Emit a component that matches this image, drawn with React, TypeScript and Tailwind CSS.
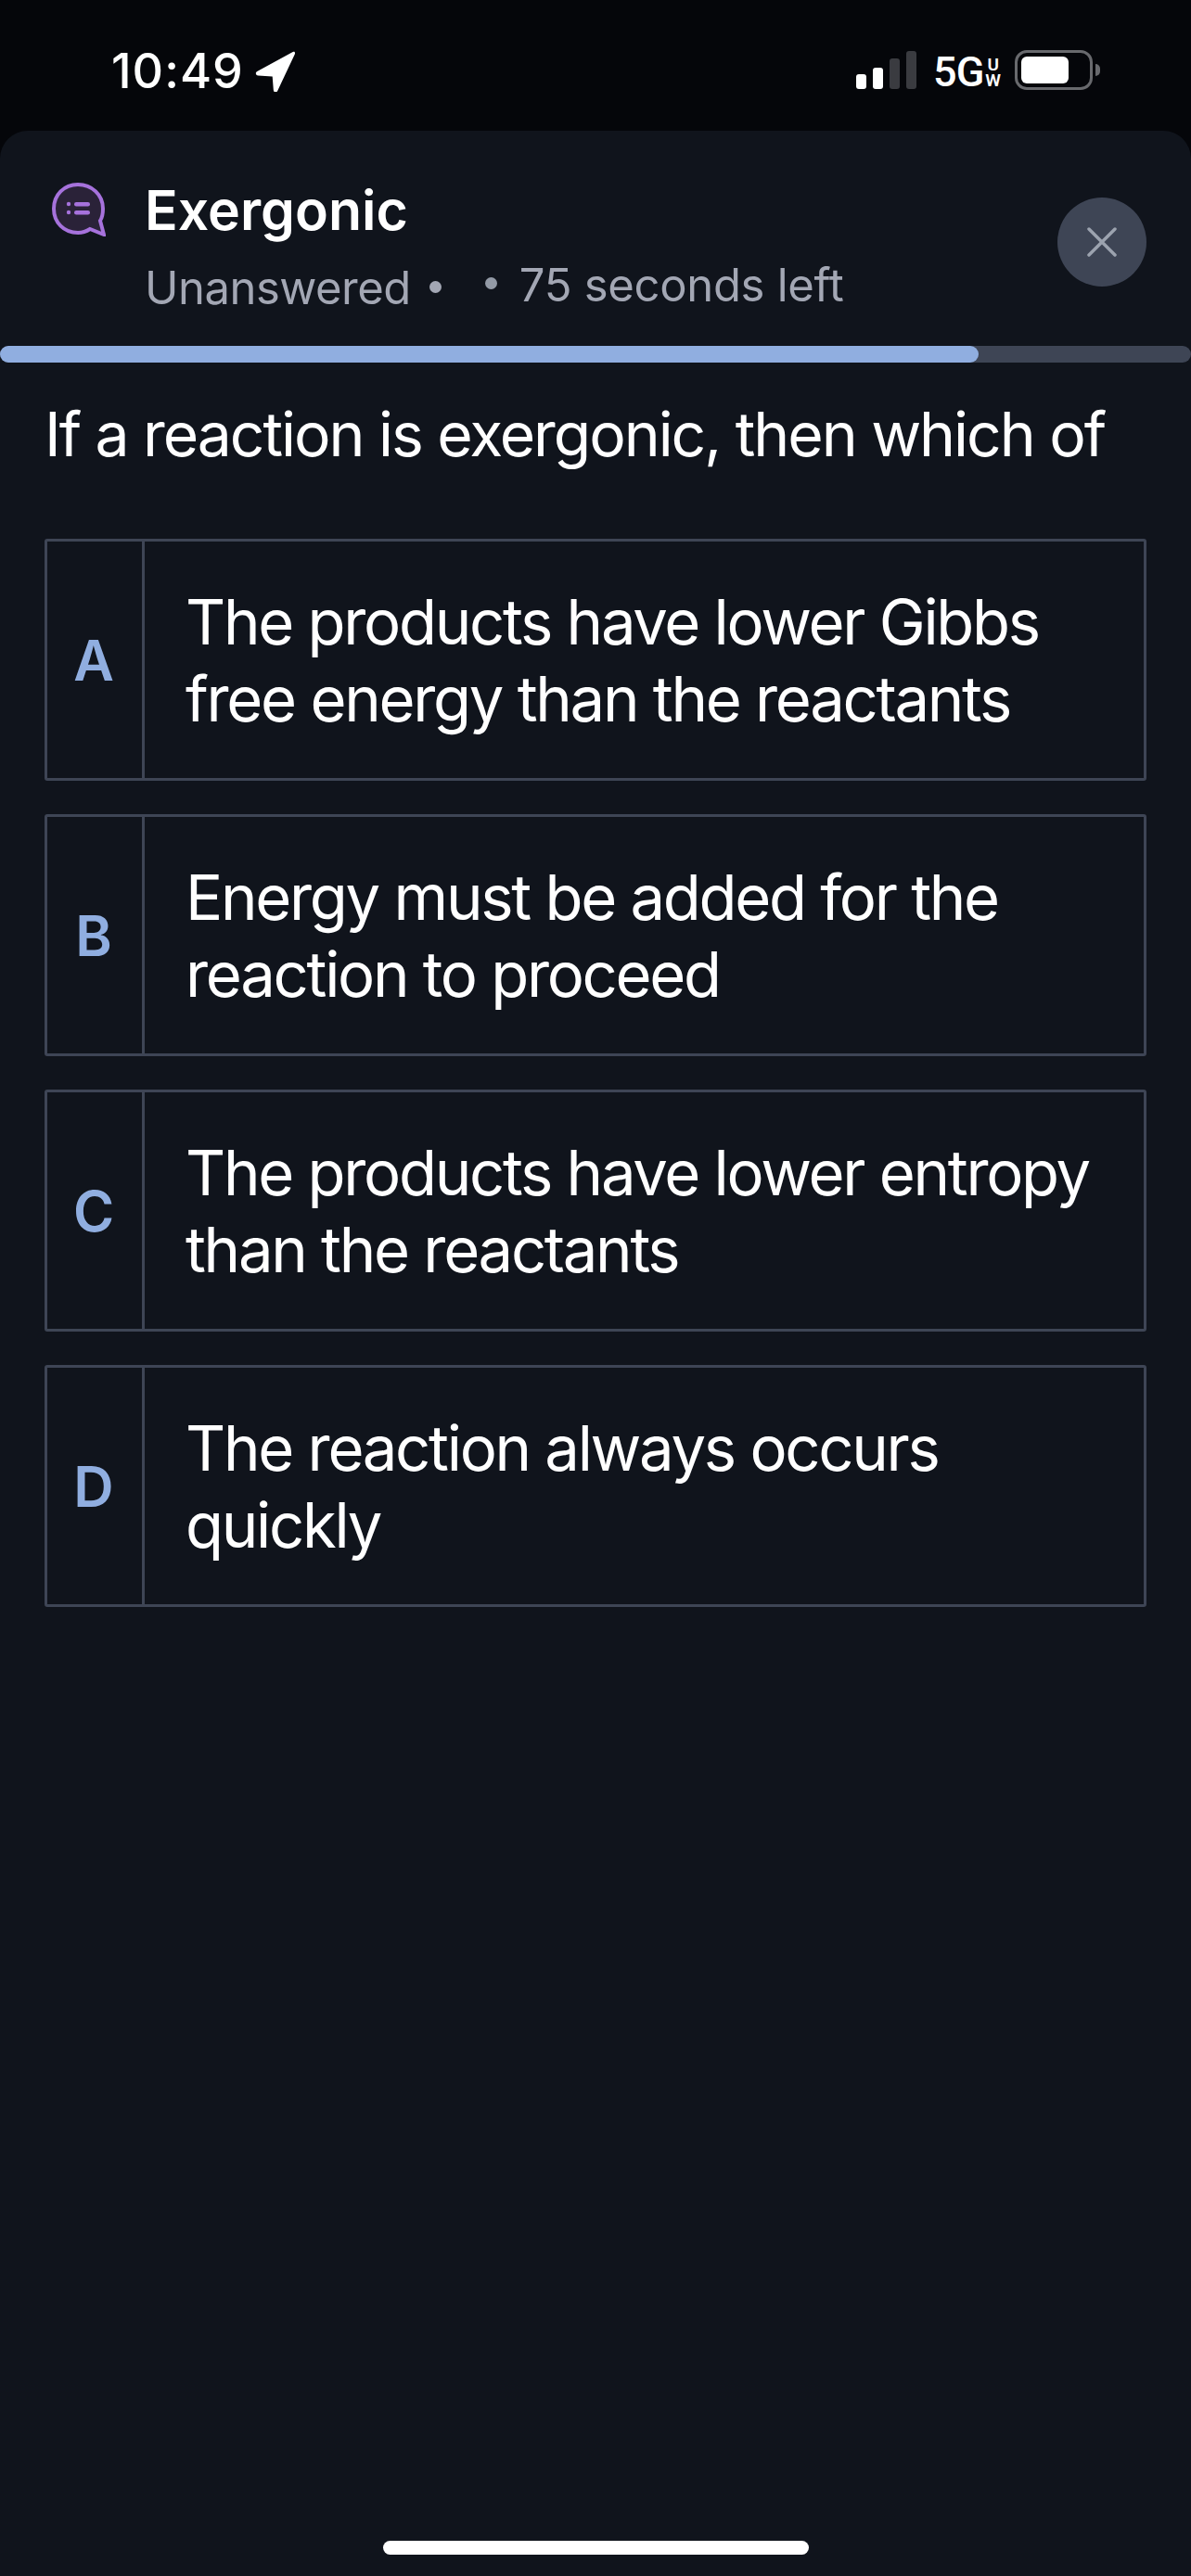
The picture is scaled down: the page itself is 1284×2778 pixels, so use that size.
const options = [
  { letter: "A", text: "The products have lower Gibbs free energy than the reactants" },
  { letter: "B", text: "Energy must be added for the reaction to proceed" },
  { letter: "C", text: "The products have lower entropy than the reactants" },
  { letter: "D", text: "The reaction always occurs quickly" },
];

function StatusBar() {
  return (
    <div className="flex h-[141px] items-start justify-between bg-[#05060a] pl-[120px] pr-[98px] pt-[54px]">
      <div className="flex items-center gap-[12px]">
        <span className="text-[52px] font-medium leading-[46px] tracking-[1px] text-white">10:49</span>
        <svg viewBox="0 0 40 40" className="h-[44px] w-[44px]">
          <path
            d="M37 1 2 20c-2 1-1.500 4 1 4l14 1 1 13c0 3 3 3 4 1L39 3c.5-2-.5-3-2-2Z"
            fill="#fff"
          />
        </svg>
      </div>
      <div className="flex items-start">
        <div className="mt-[1px] flex items-end gap-[7px]">
          <div className="h-[16px] w-[11px] rounded-[3px] bg-white" />
          <div className="h-[23px] w-[11px] rounded-[3px] bg-white" />
          <div className="h-[33px] w-[11px] rounded-[3px] bg-[#3a3b40]" />
          <div className="h-[41px] w-[11px] rounded-[3px] bg-[#3a3b40]" />
        </div>
        <span className="ml-[18px] mt-[4px] font-['Roboto',sans-serif] text-[45px] font-medium leading-[40px] tracking-[-1px] text-white">5G</span>
        <div className="ml-[2px] mt-[7px] flex flex-col items-center font-['Roboto',sans-serif] text-[19px] font-semibold leading-[17px] text-white">
          <span>U</span>
          <span>W</span>
        </div>
        <div className="ml-[15px] h-[43px] w-[84px] rounded-[13px] border-[3px] border-[#68696d] p-[4px]">
          <div className="h-full w-[51px] rounded-[6px] bg-white" />
        </div>
        <div className="ml-[3px] mt-[15px] h-[13px] w-[5px] rounded-r-full bg-[#68696d]" />
      </div>
    </div>
  );
}

function QuizIcon() {
  return (
    <svg viewBox="0 0 58 58" className="h-[58px] w-[58px]">
      <path
        d="M28 2C13 2 2 13 2 28s11 26 26 26c6 0 10-2 13-4l15 6-4-15c2-3 3-7 3-13 0-15-12-26-27-26Z"
        fill="#2a2238"
        stroke="#a672dc"
        strokeWidth="4"
        strokeLinejoin="miter"
      />
      <circle cx="18" cy="23" r="2.200" fill="#a672dc" />
      <circle cx="18" cy="32" r="2.200" fill="#a672dc" />
      <rect x="24" y="21" width="17" height="4.500" rx="2.200" fill="#a672dc" />
      <rect x="24" y="30" width="17" height="4.500" rx="2.200" fill="#a672dc" />
    </svg>
  );
}

function Header() {
  return (
    <div className="flex h-[232px] justify-between pl-[56px] pr-[48px] pt-[56px]">
      <div className="flex items-start gap-[42px]">
        <QuizIcon />
        <div className="-mt-[5px]">
          <div className="text-[59px] font-semibold leading-[70px] text-white">Exergonic</div>
          <div className="mt-[19px] flex items-start text-[49px] leading-[60px] text-[#a3a7b4]">
            <span className="tracking-[-0.5px]">Unanswered</span>
            <span className="ml-[20px] h-[13px] w-[13px] translate-y-[22px] rounded-full bg-[#a3a7b4]" />
            <span className="ml-[47px] h-[13px] w-[13px] translate-y-[18px] rounded-full bg-[#939aa6]" />
            <span className="ml-[24px] -translate-y-[3px] tracking-[-0.3px]">75 seconds left</span>
          </div>
        </div>
      </div>
      <button className="mt-[16px] flex h-[96px] w-[96px] items-center justify-center rounded-full bg-[#3e4555]">
        <svg viewBox="0 0 32 32" className="h-[32px] w-[32px]" fill="none" stroke="#9ca3af" strokeWidth="3.500" strokeLinecap="round">
          <path d="M2 2l28 28M30 2 2 30" />
        </svg>
      </button>
    </div>
  );
}

export default function App() {
  return (
    <div className="flex h-[2778px] w-[1284px] flex-col overflow-hidden bg-[#05060a] font-['Inter',sans-serif]">
      <StatusBar />
      <div className="relative flex flex-1 flex-col rounded-t-[30px] bg-[#10141c]">
        <Header />
        <div className="h-[18px] w-full rounded-full bg-[#3e4555]">
          <div className="h-full w-[1055px] rounded-full bg-[#90aee0]" />
        </div>
        <p className="mt-[37px] whitespace-nowrap px-[48px] text-[66px] leading-[80px] tracking-[-2.050px] text-white">
          If a reaction is exergonic, then which of
        </p>
        <div className="mt-[73px] flex flex-col gap-[36px] px-[48px]">
          {options.map((o) => (
            <div key={o.letter} className="flex h-[261px] rounded-[3px] border-[3px] border-[#3e4555]">
              <div className="flex w-[105px] shrink-0 items-center justify-center border-r-[3px] border-[#3e4555] pr-[2px] text-[60px] font-semibold text-[#90aee0]">
                {o.letter}
              </div>
              <div className="flex items-center pl-[44px] pr-[30px] text-[67px] leading-[83px] tracking-[-2.300px] text-white">
                {o.text}
              </div>
            </div>
          ))}
        </div>
        <div className="absolute bottom-[23px] left-[413px] h-[15px] w-[459px] rounded-full bg-white" />
      </div>
    </div>
  );
}
